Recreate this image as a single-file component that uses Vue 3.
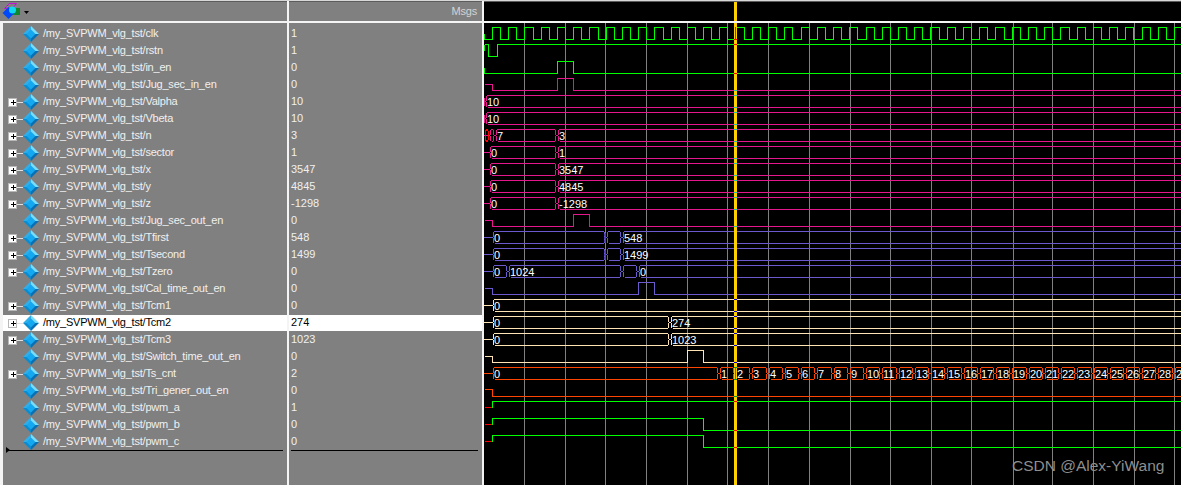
<template>
  <div class="sim">
    <div class="names pane">
      <div class="head">
        <svg class="logo" width="30" height="18" viewBox="0 0 30 18">
          <polygon points="4.5,6.5 9.5,1.5 16.5,1.5 12.5,6.5" fill="#808080" stroke="#c010d8" />
          <rect x="12" y="6" width="8" height="7" fill="#108830" />
          <polygon points="8.5,5 14.5,11 8.5,17 2.5,11" fill="#0048f8" />
          <circle cx="12.5" cy="8" r="3.5" fill="#10d8f0" />
          <polygon points="24,9 29,9 26.5,12" fill="#000" />
        </svg>
      </div>
      <div class="body">
        <div class="rows">
          <div v-for="(s, i) in signals" :key="s.name" class="row" :class="{ active: i === activeRow }">
            <div class="tree">
              <svg v-if="s.bus" width="20" height="16" viewBox="0 0 20 16">
                <rect x="5.5" y="4.5" width="8" height="8" fill="#fff" stroke="#b8b8b8" />
                <path d="M7.5 8.5h5M10 6v5" stroke="#000" fill="none" shape-rendering="crispEdges" />
                <path d="M14 8.5h6" stroke="#e0e0e0" fill="none" />
              </svg>
            </div>
            <svg class="diamond" width="16" height="16" viewBox="0 0 16 16">
              <polygon points="8,0 16,8 8,8" fill="#78dcff" />
              <polygon points="8,0 0,8 8,8" fill="#30aeea" />
              <polygon points="16,8 8,16 8,8" fill="#0870b4" />
              <polygon points="0,8 8,16 8,8" fill="#0c8cd0" />
              <polygon points="8,3.5 12.5,8 8,12.5 3.5,8" fill="#14a8f0" />
            </svg>
            <span class="label">{{ prefix }}{{ s.name }}</span>
          </div>
        </div>
        <div class="divider left-divider"><i class="marker"></i></div>
      </div>
    </div>

    <div class="msgs pane">
      <div class="head msgs-head">Msgs</div>
      <div class="body">
        <div class="rows">
          <div v-for="(s, i) in signals" :key="s.name" class="row" :class="{ active: i === activeRow }">
            <span class="value">{{ s.value }}</span>
          </div>
        </div>
        <div class="divider right-divider"></div>
      </div>
    </div>

    <div class="wave">
      <div class="wave-head"><i class="cursor-top"></i></div>
      <svg class="wave-body" width="697" height="462" viewBox="484 23 697 462" shape-rendering="crispEdges">
        <path v-for="x in grid" :key="x" :d="`M${x + 0.5} 23V485`" stroke="#808080" fill="none" />

        <template v-for="(s, i) in signals" :key="s.name">
          <path v-for="(p, j) in tracePaths(s, i)" :key="j" :d="p.d" :stroke="p.color" fill="none" />
          <text
            v-for="seg in labels(s)"
            :key="seg.x"
            class="bus-text"
            :x="seg.x + 2"
            :y="38 + 17 * i"
          >{{ seg.text }}</text>
        </template>

        <rect x="734" y="23" width="3" height="462" fill="#ffd000" />
        <rect v-for="c in crossings" :key="c.y" x="734" :y="c.y" width="3" height="1" :fill="c.color" />
        <rect x="735" y="27" width="1" height="12" fill="#ff0000" />
        <rect x="735" y="367" width="1" height="13" fill="#00a030" />

        <text class="mark" x="1012" y="471">CSDN @Alex-YiWang</text>
      </svg>
    </div>
  </div>
</template>

<script setup>
const prefix = '/my_SVPWM_vlg_tst/'
const activeRow = 17

const GREEN = '#00ff00'
const PINK = '#e6168c'
const BLUE = '#6a5acd'
const TAN = '#ffe4b5'
const ORANGE = '#ff4500'
const RED = '#ff0000'

const crossColor = {
  [GREEN]: '#ff0000',
  [PINK]: '#18c8a0',
  [TAN]: '#0000c8',
  [ORANGE]: '#00a030',
  [BLUE]: '#ffd000',
}

const grid = [524, 565, 605, 646, 687, 727, 768, 809, 850, 890, 931, 971, 1013, 1052, 1093, 1134, 1174]

// clock edges, period is 16.24px starting from the first rise
const clkEdges = []
for (let x = 492; x < 1181; x += 8.12) clkEdges.push(Math.round(x))

const cntSegs = [[492, '0']]
for (let n = 1; n <= 29; n++) cntSegs.push([Math.round(719 + (n - 1) * 16.24), String(n)])

const signals = [
  { name: 'clk', value: '1', color: GREEN, tick: true, low: true, edges: clkEdges },
  { name: 'rstn', value: '1', color: GREEN, tick: true, low: false, edges: [488, 497] },
  { name: 'in_en', value: '0', color: GREEN, tick: true, low: true, edges: [557, 573] },
  { name: 'Jug_sec_in_en', value: '0', color: PINK, stub: PINK, low: true, edges: [557, 573] },
  { name: 'Valpha', value: '10', bus: true, color: PINK, segs: [[485, '10']] },
  { name: 'Vbeta', value: '10', bus: true, color: PINK, segs: [[485, '10']] },
  { name: 'n', value: '3', bus: true, color: PINK, redStart: true, segs: [[489, ''], [495, '7'], [557, '3']] },
  { name: 'sector', value: '1', bus: true, color: PINK, segs: [[489, '0'], [557, '1']] },
  { name: 'x', value: '3547', bus: true, color: PINK, segs: [[489, '0'], [557, '3547']] },
  { name: 'y', value: '4845', bus: true, color: PINK, segs: [[489, '0'], [557, '4845']] },
  { name: 'z', value: '-1298', bus: true, color: PINK, segs: [[489, '0'], [557, '-1298']] },
  { name: 'Jug_sec_out_en', value: '0', color: PINK, stub: PINK, low: true, edges: [573, 589] },
  { name: 'Tfirst', value: '548', bus: true, color: BLUE, glitch: 605, segs: [[492, '0'], [606, ''], [622, '548']] },
  { name: 'Tsecond', value: '1499', bus: true, color: BLUE, glitch: 605, segs: [[492, '0'], [606, ''], [622, '1499']] },
  { name: 'Tzero', value: '0', bus: true, color: BLUE, segs: [[492, '0'], [508, '1024'], [622, ''], [638, '0']] },
  { name: 'Cal_time_out_en', value: '0', color: BLUE, stub: BLUE, low: true, edges: [638, 654] },
  { name: 'Tcm1', value: '0', bus: true, color: TAN, segs: [[492, '0']] },
  { name: 'Tcm2', value: '274', bus: true, color: TAN, segs: [[492, '0'], [670, '274']] },
  { name: 'Tcm3', value: '1023', bus: true, color: TAN, segs: [[492, '0'], [670, '1023']] },
  { name: 'Switch_time_out_en', value: '0', color: TAN, stub: TAN, low: true, edges: [687, 703] },
  { name: 'Ts_cnt', value: '2', bus: true, color: ORANGE, segs: cntSegs },
  { name: 'Tri_gener_out_en', value: '0', color: ORANGE, stub: ORANGE, stubHigh: true, low: true, edges: [] },
  { name: 'pwm_a', value: '1', color: GREEN, stub: RED, low: false, edges: [] },
  { name: 'pwm_b', value: '0', color: GREEN, stub: RED, low: false, edges: [703] },
  { name: 'pwm_c', value: '0', color: GREEN, stub: RED, low: false, edges: [703] },
]

const topOf = (i) => 27.5 + 17 * i
const botOf = (i) => 39.5 + 17 * i

function bitTrace(s, i) {
  const top = topOf(i)
  const bot = botOf(i)
  const mid = 33.5 + 17 * i
  const out = []
  let low = s.low
  let d
  if (s.tick) {
    // short bright start of the signal at time zero
    out.push({ d: `M484.5 ${mid}V${low ? bot : top}`, color: s.color })
    d = `M484.5 ${low ? bot : top}`
  } else {
    const stubY = s.stubHigh ? mid - 1 : mid
    out.push({ d: `M485 ${stubY}H492.5`, color: s.stub })
    d = `M492.5 ${stubY}V${low ? bot : top}`
  }
  for (const e of s.edges) {
    d += `H${e + 0.5}`
    low = !low
    d += `V${low ? bot : top}`
  }
  d += 'H1181'
  out.push({ d, color: s.color })
  return out
}

// left and right ends of a bus value, with the small notch on the middle
const leftEnd = (x, t, b, m) => `M${x + 2} ${t}L${x + 1} ${t + 1}V${m - 1}L${x} ${m}L${x + 1} ${m + 1}V${b - 1}L${x + 2} ${b}`
const rightEnd = (x, t, b, m) => `M${x - 2} ${t}L${x - 1} ${t + 1}V${m - 1}L${x} ${m}L${x - 1} ${m + 1}V${b - 1}L${x - 2} ${b}`

function busTrace(s, i) {
  const t = topOf(i)
  const b = botOf(i)
  const mid = 33.5 + 17 * i
  const out = []
  let d = ''
  s.segs.forEach((seg, j) => {
    const left = seg[0] + 0.5
    const next = s.segs[j + 1]
    d += leftEnd(left, t, b, mid)
    if (next) {
      const right = next[0] - 0.5
      d += rightEnd(right, t, b, mid)
      d += `M${left + 2} ${t}H${right - 2}M${left + 2} ${b}H${right - 2}`
    } else {
      d += `M${left + 2} ${t}H1181M${left + 2} ${b}H1181`
    }
  })
  out.push({ d, color: s.color })
  if (s.segs[0][0] > 486) {
    out.push({ d: `M484 ${mid}H${s.segs[0][0] + 0.5}`, color: s.color })
  } else {
    out.push({ d: `M484.5 ${t + 2}V${b - 2}`, color: s.color })
  }
  if (s.glitch) {
    const g = s.glitch + 0.5
    out.push({ d: `M${g} ${t + 1}V${b - 1}M${g - 1} ${t + 2}V${t + 4}M${g - 1} ${mid - 1}V${mid + 1}M${g - 1} ${b - 4}V${b - 2}`, color: '#5040b8' })
  }
  if (s.redStart) {
    out.push({ d: `M487 ${t}L485 ${t + 2}V${b - 2}L487 ${b}M487 ${t}L488.5 ${t + 2}V${b - 2}L487 ${b}`, color: RED })
  }
  return out
}

const tracePaths = (s, i) => (s.bus ? busTrace(s, i) : bitTrace(s, i))
const labels = (s) => (s.bus ? s.segs.filter((g) => g[1]).map((g) => ({ x: g[0], text: g[1] })) : [])

// the cursor inverts whatever waveform line passes under it
const crossings = []
signals.forEach((s, i) => {
  const color = crossColor[s.color]
  if (s.bus) {
    crossings.push({ y: Math.floor(topOf(i)), color }, { y: Math.floor(botOf(i)), color })
  } else {
    let low = s.low
    s.edges.forEach((e) => { if (e < 735) low = !low })
    crossings.push({ y: Math.floor(low ? botOf(i) : topOf(i)), color })
  }
})
</script>

<style>
html, body {
  margin: 0;
  background: #000;
  overflow: hidden;
}
</style>

<style scoped>
.sim {
  display: flex;
  width: 1181px;
  height: 485px;
  box-sizing: border-box;
  border-top: 1px solid #d8d8d8;
  font-family: "Liberation Sans", Arial, sans-serif;
  font-size: 11px;
  overflow: hidden;
}

.pane {
  display: flex;
  flex-direction: column;
  box-sizing: border-box;
  background: #808080;
  border-right: 2px solid #f4f4f4;
}

.names {
  width: 289px;
}

.msgs {
  width: 195px;
}

.head {
  height: 19px;
  flex: none;
  background: #808080;
  border-top: 1px solid #5c5c5c;
  border-bottom: 2px solid #f4f4f4;
}

.logo {
  display: block;
}

.msgs-head {
  line-height: 18px;
  text-align: right;
  padding-right: 5px;
  color: #d4d4d4;
  letter-spacing: -0.2px;
}

.body {
  flex: 1;
  box-sizing: border-box;
  padding-top: 3px;
}

.names .body {
  border-left: 3px solid #f4f4f4;
}

.rows {
  display: flex;
  flex-direction: column;
  gap: 1px;
}

.row {
  display: flex;
  align-items: center;
  height: 16px;
  color: #f0f0f0;
  white-space: nowrap;
}

.row.active {
  background: #fff;
  color: #000;
}

.tree {
  width: 20px;
  height: 16px;
  flex: none;
}

.tree svg {
  display: block;
}

.diamond {
  flex: none;
}

.label {
  margin-left: 4px;
  margin-bottom: 2px;
  letter-spacing: -0.22px;
}

.value {
  margin-left: 2px;
  margin-bottom: 2px;
}

.divider {
  position: relative;
  height: 1px;
  background: #000;
}

.left-divider {
  margin: 0 4px 0 5px;
}

.right-divider {
  margin: 0 4px 0 2px;
}

.marker {
  position: absolute;
  left: -2px;
  top: -3px;
  width: 0;
  height: 0;
  border-left: 4px solid #000;
  border-top: 3px solid transparent;
  border-bottom: 3px solid transparent;
}

.wave {
  flex: 1;
  background: #000;
  display: flex;
  flex-direction: column;
}

.wave-head {
  position: relative;
  height: 19px;
  flex: none;
  border-top: 1px solid #5c5c5c;
  border-bottom: 2px solid #f4f4f4;
}

.cursor-top {
  position: absolute;
  left: 250px;
  top: 0;
  width: 3px;
  height: 100%;
  background: #ffd000;
}

.wave-body {
  display: block;
}

.bus-text {
  fill: #fff;
  font-size: 11px;
  font-family: "Liberation Sans", Arial, sans-serif;
}

.mark {
  fill: #8e8e8e;
  font-size: 15.5px;
  font-family: "Liberation Sans", Arial, sans-serif;
}
</style>
